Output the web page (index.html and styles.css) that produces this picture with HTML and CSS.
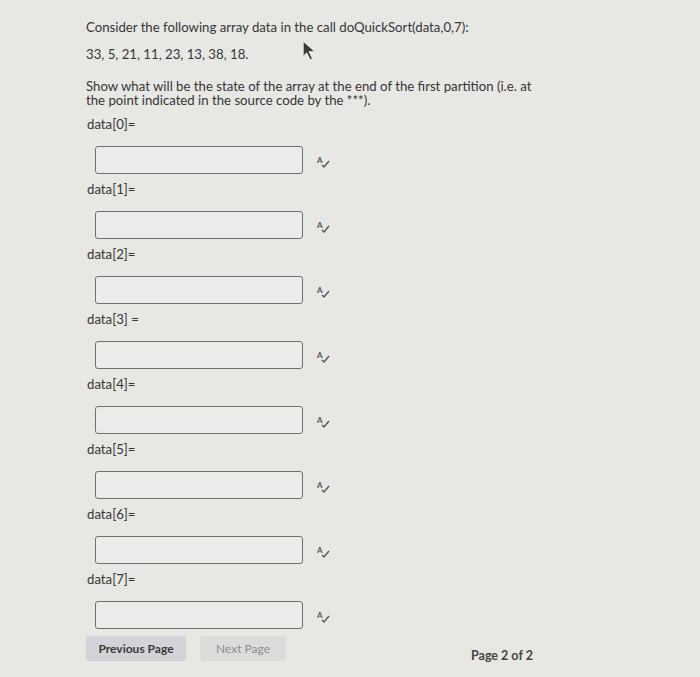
FILE: index.html
```html
<!DOCTYPE html>
<html>
<head>
<meta charset="utf-8">
<link rel="stylesheet" href="styles.css">
</head>
<body>
<div class="page">
  <p class="line">Consider the following array data in the call doQuickSort(data,0,7):</p>
  <p class="line nums">33, 5, 21, 11, 23, 13, 38, 18.</p>
  <p class="para">Show what will be the state of the array at the end of the first partition (i.e. at the point indicated in the source code by the ***).</p>

  <div class="fields">
    <div class="field"><div class="label">data[0]=</div><div class="row"><div class="box"></div><span class="spell"><svg viewBox="0 0 14 14" width="14" height="14"><text x="1" y="8" font-family="Lato, sans-serif" font-size="8" font-weight="700" fill="#555">A</text><path d="M6 10 L8 12 L13 6" fill="none" stroke="#555" stroke-width="1.4"/></svg></span></div></div>
    <div class="field"><div class="label">data[1]=</div><div class="row"><div class="box"></div><span class="spell"><svg viewBox="0 0 14 14" width="14" height="14"><text x="1" y="8" font-family="Lato, sans-serif" font-size="8" font-weight="700" fill="#555">A</text><path d="M6 10 L8 12 L13 6" fill="none" stroke="#555" stroke-width="1.4"/></svg></span></div></div>
    <div class="field"><div class="label">data[2]=</div><div class="row"><div class="box"></div><span class="spell"><svg viewBox="0 0 14 14" width="14" height="14"><text x="1" y="8" font-family="Lato, sans-serif" font-size="8" font-weight="700" fill="#555">A</text><path d="M6 10 L8 12 L13 6" fill="none" stroke="#555" stroke-width="1.4"/></svg></span></div></div>
    <div class="field"><div class="label">data[3] =</div><div class="row"><div class="box"></div><span class="spell"><svg viewBox="0 0 14 14" width="14" height="14"><text x="1" y="8" font-family="Lato, sans-serif" font-size="8" font-weight="700" fill="#555">A</text><path d="M6 10 L8 12 L13 6" fill="none" stroke="#555" stroke-width="1.4"/></svg></span></div></div>
    <div class="field"><div class="label">data[4]=</div><div class="row"><div class="box"></div><span class="spell"><svg viewBox="0 0 14 14" width="14" height="14"><text x="1" y="8" font-family="Lato, sans-serif" font-size="8" font-weight="700" fill="#555">A</text><path d="M6 10 L8 12 L13 6" fill="none" stroke="#555" stroke-width="1.4"/></svg></span></div></div>
    <div class="field"><div class="label">data[5]=</div><div class="row"><div class="box"></div><span class="spell"><svg viewBox="0 0 14 14" width="14" height="14"><text x="1" y="8" font-family="Lato, sans-serif" font-size="8" font-weight="700" fill="#555">A</text><path d="M6 10 L8 12 L13 6" fill="none" stroke="#555" stroke-width="1.4"/></svg></span></div></div>
    <div class="field"><div class="label">data[6]=</div><div class="row"><div class="box"></div><span class="spell"><svg viewBox="0 0 14 14" width="14" height="14"><text x="1" y="8" font-family="Lato, sans-serif" font-size="8" font-weight="700" fill="#555">A</text><path d="M6 10 L8 12 L13 6" fill="none" stroke="#555" stroke-width="1.4"/></svg></span></div></div>
    <div class="field"><div class="label">data[7]=</div><div class="row"><div class="box"></div><span class="spell"><svg viewBox="0 0 14 14" width="14" height="14"><text x="1" y="8" font-family="Lato, sans-serif" font-size="8" font-weight="700" fill="#555">A</text><path d="M6 10 L8 12 L13 6" fill="none" stroke="#555" stroke-width="1.4"/></svg></span></div></div>
  </div>

  <div class="footer">
    <button class="btn prev">Previous Page</button>
    <button class="btn next">Next Page</button>
    <span class="pageno">Page 2 of 2</span>
  </div>

  <svg class="cursor" viewBox="0 0 12 18" width="14" height="21"><path d="M1 1 L1 14 L4 11 L7 17 L9 16 L6 10 L11 10 Z" fill="#3a3a3a" stroke="#eee" stroke-width="0.8"/></svg>
</div>
</body>
</html>
```

FILE: styles.css
```css
html, body {
  margin: 0;
  padding: 0;
}
body {
  background: #e7e7e4;
  font-family: Lato, "Liberation Sans", sans-serif;
  color: #363636;
  font-size: 13.2px;
}
.page {
  position: relative;
  width: 700px;
  height: 677px;
  box-sizing: border-box;
  padding: 19px 0 0 86px;
}
p {
  margin: 0;
}
.line {
  line-height: 16px;
}
.nums {
  margin-top: 11px;
}
.para {
  margin-top: 17px;
  width: 460px;
  line-height: 14px;
}
.fields {
  margin-top: 9px;
}
.field {
  display: flex;
  flex-direction: column;
}
.label {
  line-height: 16px;
  height: 16px;
  margin-left: 1px;
}
.row {
  display: flex;
  align-items: center;
  gap: 13px;
  margin-top: 14px;
  margin-bottom: 7px;
  padding-left: 9px;
}
.box {
  box-sizing: border-box;
  width: 208px;
  height: 28px;
  border: 1.5px solid #707070;
  border-radius: 3px;
  background: #ebebe9;
}
.spell {
  display: flex;
  margin-top: 4px;
}
.footer {
  display: flex;
  align-items: flex-start;
  margin-top: 0;
}
.btn {
  font-family: Lato, "Liberation Sans", sans-serif;
  font-size: 12px;
  border: none;
  border-radius: 3px;
  height: 25px;
  padding: 0;
}
.prev {
  width: 100px;
  background: #d2d4d7;
  color: #3a3a3a;
  font-weight: 700;
}
.next {
  width: 86px;
  margin-left: 14px;
  background: #dcdcda;
  color: #8c8c8c;
}
.pageno {
  margin-left: 185px;
  margin-top: 12px;
  font-size: 12.5px;
  font-weight: 700;
  color: #444;
}
.cursor {
  position: absolute;
  left: 302px;
  top: 40px;
}
```
